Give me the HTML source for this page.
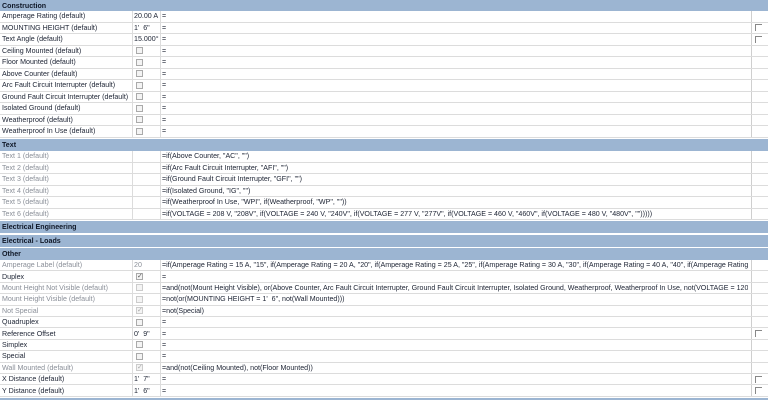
<!DOCTYPE html>
<html><head><meta charset="utf-8"><style>
html,body{margin:0;padding:0;background:#fff;width:768px;height:400px;overflow:hidden}
body{position:relative;font-family:"Liberation Sans",sans-serif;font-size:7.1px;color:#1c2333}
.h{position:absolute;left:0;width:768px;background:#9cb5d2;font-weight:bold;color:#101828;box-sizing:border-box;padding-left:2px;display:flex;align-items:center}
.r{position:absolute;left:0;width:768px;box-sizing:border-box;border-bottom:1px solid #dcdcdc;display:flex;align-items:center;white-space:nowrap}
.r>div{height:100%;box-sizing:border-box;display:flex;align-items:center;overflow:hidden}
.n{width:133px;padding-left:2px;border-right:1px solid #dcdcdc}
.v{width:28px;padding-left:1px;border-right:1px solid #dcdcdc}
.f{width:591px;padding-left:1px;padding-right:3px;border-right:1px solid #cfcfcf}
.f span{overflow:hidden;display:block;width:100%}
.c{width:16px;padding-left:3px}
.g{color:#8a8f98}
.cb{width:7px;height:7px;border:1px solid #aaa;background:#f4f4f4;box-sizing:border-box;margin-left:2px;font-size:7px;line-height:6px;text-align:center;color:#555}
.cbr{width:7px;height:7px;border-top:1px solid #888;border-left:1px solid #888;box-sizing:border-box}
</style></head><body>
<div class="h" style="top:0;height:11px">Construction</div>
<div class="r" style="top:11px;height:11.5px"><div class="n">Amperage Rating (default)</div><div class="v">20.00 A</div><div class="f">=</div><div class="c"></div></div>
<div class="r" style="top:22.5px;height:11.5px"><div class="n">MOUNTING HEIGHT (default)</div><div class="v">1'&nbsp; 6"</div><div class="f">=</div><div class="c"><div class="cbr"></div></div></div>
<div class="r" style="top:34px;height:11.5px"><div class="n">Text Angle (default)</div><div class="v">15.000°</div><div class="f">=</div><div class="c"><div class="cbr"></div></div></div>
<div class="r" style="top:45.5px;height:11.5px"><div class="n">Ceiling Mounted (default)</div><div class="v"><div class="cb"></div></div><div class="f">=</div><div class="c"></div></div>
<div class="r" style="top:57px;height:11.5px"><div class="n">Floor Mounted (default)</div><div class="v"><div class="cb"></div></div><div class="f">=</div><div class="c"></div></div>
<div class="r" style="top:68.5px;height:11.5px"><div class="n">Above Counter (default)</div><div class="v"><div class="cb"></div></div><div class="f">=</div><div class="c"></div></div>
<div class="r" style="top:80px;height:11.5px"><div class="n">Arc Fault Circuit Interrupter (default)</div><div class="v"><div class="cb"></div></div><div class="f">=</div><div class="c"></div></div>
<div class="r" style="top:91.5px;height:11.5px"><div class="n">Ground Fault Circuit Interrupter (default)</div><div class="v"><div class="cb"></div></div><div class="f">=</div><div class="c"></div></div>
<div class="r" style="top:103px;height:11.5px"><div class="n">Isolated Ground (default)</div><div class="v"><div class="cb"></div></div><div class="f">=</div><div class="c"></div></div>
<div class="r" style="top:114.5px;height:11.5px"><div class="n">Weatherproof (default)</div><div class="v"><div class="cb"></div></div><div class="f">=</div><div class="c"></div></div>
<div class="r" style="top:126px;height:11.5px"><div class="n">Weatherproof In Use (default)</div><div class="v"><div class="cb"></div></div><div class="f">=</div><div class="c"></div></div>

<div class="h" style="top:139px;height:12px">Text</div>
<div class="r g" style="top:151px;height:11.5px"><div class="n">Text 1 (default)</div><div class="v"></div><div class="f" style="color:#1c2333">=if(Above Counter, "AC", "")</div><div class="c"></div></div>
<div class="r g" style="top:162.5px;height:11.5px"><div class="n">Text 2 (default)</div><div class="v"></div><div class="f" style="color:#1c2333">=if(Arc Fault Circuit Interrupter, "AFI", "")</div><div class="c"></div></div>
<div class="r g" style="top:174px;height:11.5px"><div class="n">Text 3 (default)</div><div class="v"></div><div class="f" style="color:#1c2333">=if(Ground Fault Circuit Interrupter, "GFI", "")</div><div class="c"></div></div>
<div class="r g" style="top:185.5px;height:11.5px"><div class="n">Text 4 (default)</div><div class="v"></div><div class="f" style="color:#1c2333">=if(Isolated Ground, "IG", "")</div><div class="c"></div></div>
<div class="r g" style="top:197px;height:11.5px"><div class="n">Text 5 (default)</div><div class="v"></div><div class="f" style="color:#1c2333">=if(Weatherproof In Use, "WPI", if(Weatherproof, "WP", ""))</div><div class="c"></div></div>
<div class="r g" style="top:208.5px;height:11.5px"><div class="n">Text 6 (default)</div><div class="v"></div><div class="f" style="color:#1c2333">=if(VOLTAGE = 208 V, "208V", if(VOLTAGE = 240 V, "240V", if(VOLTAGE = 277 V, "277V", if(VOLTAGE = 460 V, "460V", if(VOLTAGE = 480 V, "480V", "")))))</div><div class="c"></div></div>

<div class="h" style="top:221px;height:12px">Electrical Engineering</div>
<div class="h" style="top:234.5px;height:12px">Electrical - Loads</div>
<div class="h" style="top:248px;height:12px">Other</div>

<div class="r g" style="top:260px;height:11.4px"><div class="n">Amperage Label (default)</div><div class="v">20</div><div class="f" style="color:#1c2333"><span>=if(Amperage Rating = 15 A, "15", if(Amperage Rating = 20 A, "20", if(Amperage Rating = 25 A, "25", if(Amperage Rating = 30 A, "30", if(Amperage Rating = 40 A, "40", if(Amperage Rating = 50 A, "50"</span></div><div class="c"></div></div>
<div class="r" style="top:271.4px;height:11.4px"><div class="n">Duplex</div><div class="v"><div class="cb">✓</div></div><div class="f">=</div><div class="c"></div></div>
<div class="r g" style="top:282.8px;height:11.4px"><div class="n">Mount Height Not Visible (default)</div><div class="v"><div class="cb" style="border-color:#ccc"></div></div><div class="f" style="color:#1c2333"><span>=and(not(Mount Height Visible), or(Above Counter, Arc Fault Circuit Interrupter, Ground Fault Circuit Interrupter, Isolated Ground, Weatherproof, Weatherproof In Use, not(VOLTAGE = 120 V)))</span></div><div class="c"></div></div>
<div class="r g" style="top:294.2px;height:11.4px"><div class="n">Mount Height Visible (default)</div><div class="v"><div class="cb" style="border-color:#ccc"></div></div><div class="f" style="color:#1c2333">=not(or(MOUNTING HEIGHT = 1'&nbsp; 6", not(Wall Mounted)))</div><div class="c"></div></div>
<div class="r g" style="top:305.6px;height:11.4px"><div class="n">Not Special</div><div class="v"><div class="cb" style="border-color:#ccc;color:#aaa">✓</div></div><div class="f" style="color:#1c2333">=not(Special)</div><div class="c"></div></div>
<div class="r" style="top:317px;height:11.4px"><div class="n">Quadruplex</div><div class="v"><div class="cb"></div></div><div class="f">=</div><div class="c"></div></div>
<div class="r" style="top:328.4px;height:11.4px"><div class="n">Reference Offset</div><div class="v">0'&nbsp; 9"</div><div class="f">=</div><div class="c"><div class="cbr"></div></div></div>
<div class="r" style="top:339.8px;height:11.4px"><div class="n">Simplex</div><div class="v"><div class="cb"></div></div><div class="f">=</div><div class="c"></div></div>
<div class="r" style="top:351.2px;height:11.4px"><div class="n">Special</div><div class="v"><div class="cb"></div></div><div class="f">=</div><div class="c"></div></div>
<div class="r g" style="top:362.6px;height:11.4px"><div class="n">Wall Mounted (default)</div><div class="v"><div class="cb" style="border-color:#ccc;color:#aaa">✓</div></div><div class="f" style="color:#1c2333">=and(not(Ceiling Mounted), not(Floor Mounted))</div><div class="c"></div></div>
<div class="r" style="top:374px;height:11.4px"><div class="n">X Distance (default)</div><div class="v">1'&nbsp; 7"</div><div class="f">=</div><div class="c"><div class="cbr"></div></div></div>
<div class="r" style="top:385.4px;height:11.4px"><div class="n">Y Distance (default)</div><div class="v">1'&nbsp; 6"</div><div class="f">=</div><div class="c"><div class="cbr"></div></div></div>
<div class="h" style="top:398px;height:3px"></div>
</body></html>
